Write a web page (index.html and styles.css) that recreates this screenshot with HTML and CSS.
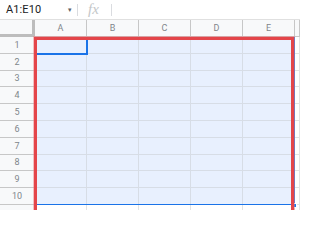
FILE: index.html
```html
<!DOCTYPE html>
<html>
<head>
<meta charset="utf-8">
<link rel="stylesheet" href="styles.css">
</head>
<body>
<div class="app">
  <div class="bar">
    <div class="namebox">A1:E10</div>
    <div class="caret">&#9662;</div>
    <div class="sep"></div>
    <div class="fx">fx</div>
    <div class="sep"></div>
  </div>
  <div class="sheet">
    <div class="grid">
      <div class="hd corner"></div><div class="hd">A</div><div class="hd">B</div><div class="hd">C</div><div class="hd">D</div><div class="hd">E</div><div class="hd"></div>
      <div class="rh">1</div><div class="c s"></div><div class="c s"></div><div class="c s"></div><div class="c s"></div><div class="c s"></div><div class="c"></div>
      <div class="rh">2</div><div class="c s"></div><div class="c s"></div><div class="c s"></div><div class="c s"></div><div class="c s"></div><div class="c"></div>
      <div class="rh">3</div><div class="c s"></div><div class="c s"></div><div class="c s"></div><div class="c s"></div><div class="c s"></div><div class="c"></div>
      <div class="rh">4</div><div class="c s"></div><div class="c s"></div><div class="c s"></div><div class="c s"></div><div class="c s"></div><div class="c"></div>
      <div class="rh">5</div><div class="c s"></div><div class="c s"></div><div class="c s"></div><div class="c s"></div><div class="c s"></div><div class="c"></div>
      <div class="rh">6</div><div class="c s"></div><div class="c s"></div><div class="c s"></div><div class="c s"></div><div class="c s"></div><div class="c"></div>
      <div class="rh">7</div><div class="c s"></div><div class="c s"></div><div class="c s"></div><div class="c s"></div><div class="c s"></div><div class="c"></div>
      <div class="rh">8</div><div class="c s"></div><div class="c s"></div><div class="c s"></div><div class="c s"></div><div class="c s"></div><div class="c"></div>
      <div class="rh">9</div><div class="c s"></div><div class="c s"></div><div class="c s"></div><div class="c s"></div><div class="c s"></div><div class="c"></div>
      <div class="rh">10</div><div class="c s"></div><div class="c s"></div><div class="c s"></div><div class="c s"></div><div class="c s"></div><div class="c"></div>
      <div class="rh"></div><div class="c"></div><div class="c"></div><div class="c"></div><div class="c"></div><div class="c"></div><div class="c"></div>
    </div>
    <div class="range"></div>
    <div class="active"></div>
    <div class="handle"></div>
    <div class="mark"></div>
  </div>
</div>
</body>
</html>
```
FILE: styles.css
```css
html, body {
  margin: 0;
  padding: 0;
  background: #ffffff;
}
.app {
  width: 300px;
  height: 210px;
  overflow: hidden;
  font-family: Roboto, "Liberation Sans", Arial, sans-serif;
}
.bar {
  height: 19px;
  border-bottom: 1px solid #e0e0e0;
  display: flex;
  align-items: center;
  box-sizing: content-box;
}
.namebox {
  font-size: 11px;
  color: #202124;
  padding-left: 6px;
  width: 62px;
  letter-spacing: 0.1px;
}
.caret {
  font-size: 7px;
  color: #5f6368;
  width: 9px;
}
.sep {
  width: 1px;
  height: 12px;
  background: #dadce0;
}
.fx {
  font-family: "Liberation Serif", "DejaVu Serif", serif;
  font-style: italic;
  font-size: 15px;
  color: #c4c7c9;
  width: 33px;
  padding-left: 10px;
  box-sizing: border-box;
  line-height: 1;
}
.sheet {
  position: relative;
}
.grid {
  display: grid;
  grid-template-columns: 35px repeat(5, 52px) 1fr;
  grid-template-rows: 17px repeat(10, 16.8px) 10px;
}
.hd, .rh {
  background: #f8f9fa;
  border-right: 1px solid #c7c7c7;
  border-bottom: 1px solid #c7c7c7;
  color: #80868b;
  font-size: 9px;
  display: flex;
  align-items: center;
  justify-content: center;
  box-sizing: border-box;
}
.hd.corner {
  border-right: 3px solid #bdbdbd;
  border-bottom: 3px solid #bdbdbd;
}
.c {
  border-right: 1px solid #e2e3e3;
  border-bottom: 1px solid #e2e3e3;
  box-sizing: border-box;
}
.c.s {
  background: #e8f0fe;
  border-color: #d7dde6;
}
.range {
  position: absolute;
  left: 35px;
  top: 17px;
  width: 260px;
  height: 168px;
  border: 1px solid #1a73e8;
  box-sizing: border-box;
}
.active {
  position: absolute;
  left: 35px;
  top: 17px;
  width: 53px;
  height: 18px;
  border: 2px solid #1a73e8;
  box-sizing: border-box;
}
.handle {
  position: absolute;
  left: 292px;
  top: 183px;
  width: 5px;
  height: 5px;
  background: #1a73e8;
  border: 1px solid #ffffff;
  box-sizing: border-box;
}
.mark {
  position: absolute;
  left: 34px;
  top: 17px;
  width: 260px;
  height: 176px;
  border: 3px solid #e4454a;
  box-shadow: 0 0 0 1px rgba(236, 120, 125, 0.45);
  box-sizing: border-box;
}
```
